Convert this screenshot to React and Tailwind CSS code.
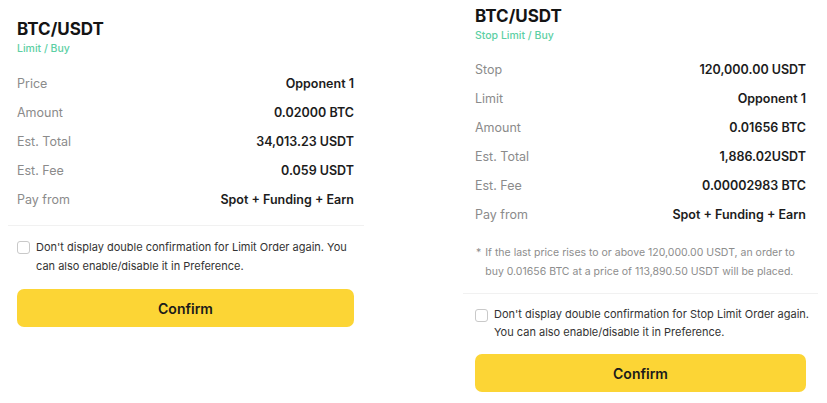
import React from 'react';

const Row = ({ label, value }) => (
    <div className="flex items-center justify-between h-[29px]">
        <span className="text-[#8b8b8b] text-[12.5px]">{label}</span>
        <span className="text-[#1c1c1c] text-[12.5px] font-semibold">{value}</span>
    </div>
);

const ConfirmPanel = ({ type, rows, note, lines, className, dividerClass, rowsClass, prefClass, buttonClass }) => (
    <div className={className}>
        {/* Header */}
        <h2 className="text-[#141414] text-[17px] font-bold leading-[22px]">BTC/USDT</h2>
        <p className="text-[#5ccfa4] text-[10.5px] font-medium leading-[14px] mt-[2px]">{type}</p>

        {/* Details */}
        <div className={rowsClass}>
            {rows.map((r) => (
                <Row key={r.label} label={r.label} value={r.value} />
            ))}
        </div>

        {note && (
            <div className="flex gap-[4px] mt-[13px] text-[#8d8d8d] text-[10.5px] leading-[19px]">
                <span className="pl-px">*</span>
                <p>
                    {note[0]}
                    <br />
                    {note[1]}
                </p>
            </div>
        )}

        <div className={`h-px bg-[#f1f1f1] ${dividerClass}`}></div>

        {/* Preference */}
        <div className="flex gap-[6px] pt-[10px]">
            <span className="mt-[4.5px] size-[13px] shrink-0 rounded-[3px] border border-[#c9c9c9] bg-white"></span>
            <p className={`text-[#333333] text-[11px] whitespace-nowrap ${prefClass}`}>
                {lines[0]}
                <br />
                {lines[1]}
            </p>
        </div>

        <button className={`w-full h-[38px] rounded-[7px] bg-[#fcd535] text-[#1a1a1a] text-[14px] font-semibold ${buttonClass}`}>
            Confirm
        </button>
    </div>
);

export default function App() {
    return (
        <div
            className="flex items-start w-[827px] h-[403px] bg-white overflow-hidden"
            style={{ fontFamily: 'Inter, "Noto Sans", sans-serif' }}
        >
            <ConfirmPanel
                className="ml-[17px] mt-[18px] w-[337px]"
                rowsClass="mt-[14px]"
                dividerClass="-ml-[9px] -mr-[10px] mt-[10px]"
                prefClass="leading-[19px] pt-[2px]"
                buttonClass="mt-[13px]"
                type="Limit / Buy"
                rows={[
                    { label: 'Price', value: 'Opponent 1' },
                    { label: 'Amount', value: '0.02000 BTC' },
                    { label: 'Est. Total', value: '34,013.23 USDT' },
                    { label: 'Est. Fee', value: '0.059 USDT' },
                    { label: 'Pay from', value: 'Spot + Funding + Earn' },
                ]}
                lines={[
                    "Don't display double confirmation for Limit Order again. You",
                    'can also enable/disable it in Preference.',
                ]}
            />
            <ConfirmPanel
                className="ml-[121px] mt-[5px] w-[331px]"
                rowsClass="mt-[13px]"
                dividerClass="-ml-[12px] -mr-[12px] mt-[12px]"
                prefClass="leading-[18px] pt-[1px]"
                buttonClass="mt-[13px]"
                type="Stop Limit / Buy"
                rows={[
                    { label: 'Stop', value: '120,000.00 USDT' },
                    { label: 'Limit', value: 'Opponent 1' },
                    { label: 'Amount', value: '0.01656 BTC' },
                    { label: 'Est. Total', value: '1,886.02USDT' },
                    { label: 'Est. Fee', value: '0.00002983 BTC' },
                    { label: 'Pay from', value: 'Spot + Funding + Earn' },
                ]}
                note={[
                    'If the last price rises to or above 120,000.00 USDT, an order to',
                    'buy 0.01656 BTC at a price of 113,890.50 USDT will be placed.',
                ]}
                lines={[
                    "Don't display double confirmation for Stop Limit Order again.",
                    'You can also enable/disable it in Preference.',
                ]}
            />
        </div>
    );
}
